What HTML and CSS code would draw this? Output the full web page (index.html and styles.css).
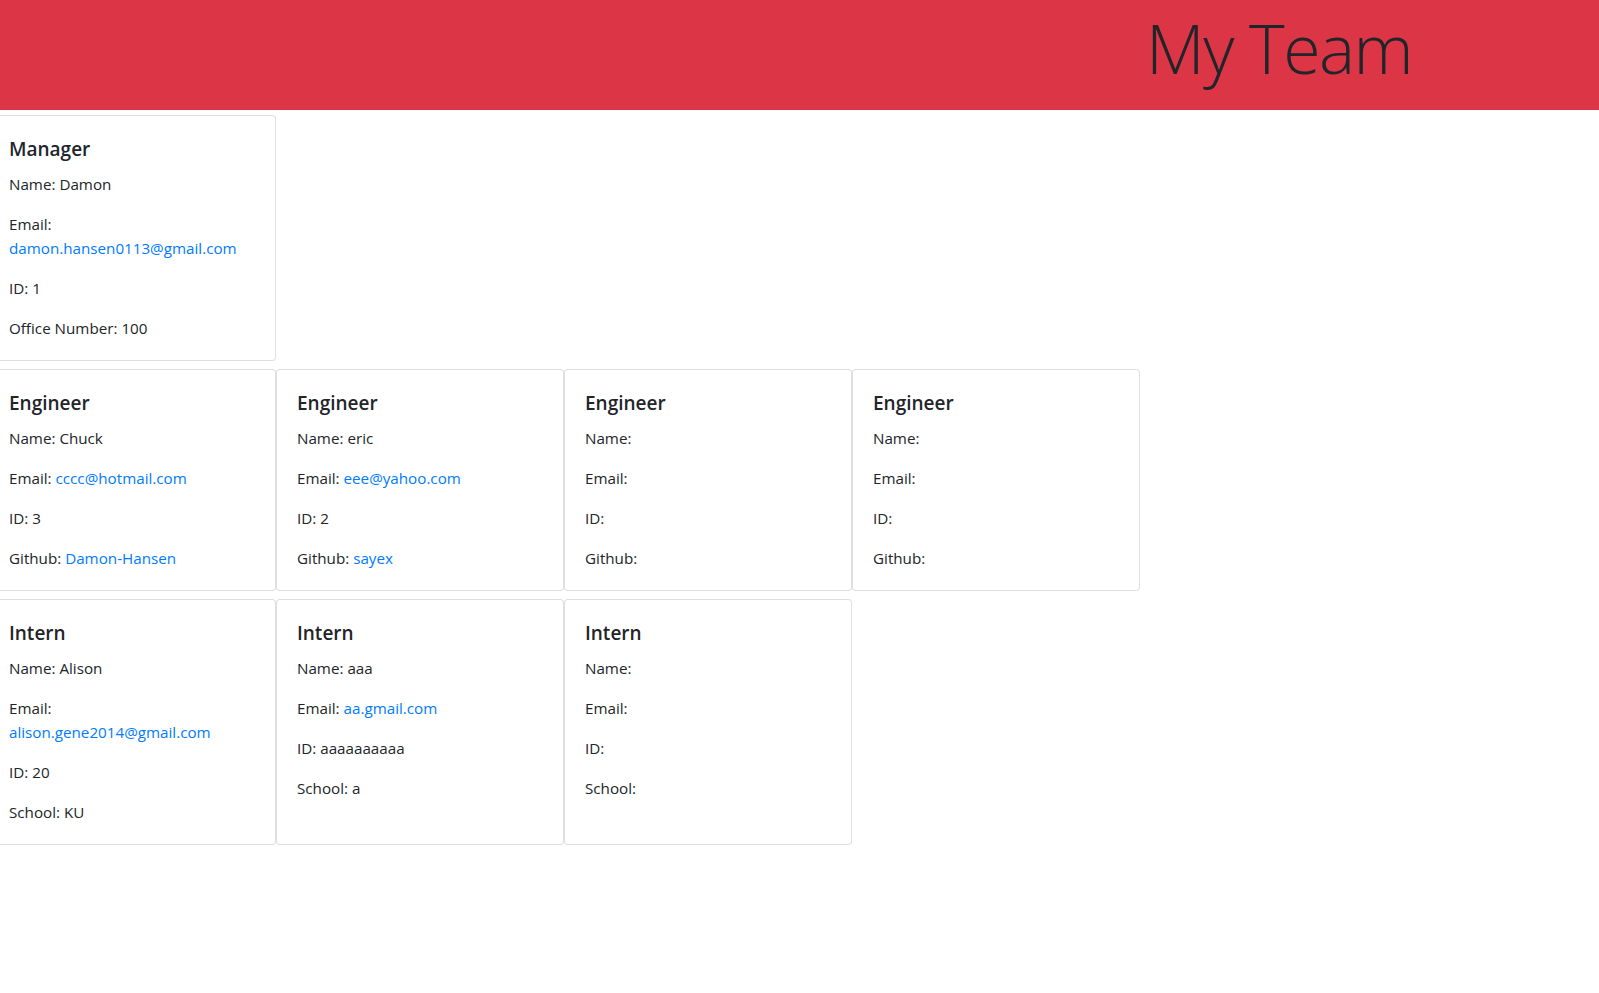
FILE: index.html
```html
<!DOCTYPE html>
<html lang="en">
<head>
<meta charset="utf-8">
<title>My Team</title>
<link rel="stylesheet" href="styles.css">
</head>
<body>
<header class="banner">
  <h1 class="banner-title">My Team</h1>
</header>
<main class="team">
  <div class="team-row">
    <div class="card">
      <h5 class="card-title">Manager</h5>
      <p class="card-text">Name: Damon</p>
      <p class="card-text">Email: <a href="#">damon.hansen0113@gmail.com</a></p>
      <p class="card-text">ID: 1</p>
      <p class="card-text">Office Number: 100</p>
    </div>
  </div>
  <div class="team-row">
    <div class="card">
      <h5 class="card-title">Engineer</h5>
      <p class="card-text">Name: Chuck</p>
      <p class="card-text">Email: <a href="#">cccc@hotmail.com</a></p>
      <p class="card-text">ID: 3</p>
      <p class="card-text">Github: <a href="#">Damon-Hansen</a></p>
    </div>
    <div class="card">
      <h5 class="card-title">Engineer</h5>
      <p class="card-text">Name: eric</p>
      <p class="card-text">Email: <a href="#">eee@yahoo.com</a></p>
      <p class="card-text">ID: 2</p>
      <p class="card-text">Github: <a href="#">sayex</a></p>
    </div>
    <div class="card">
      <h5 class="card-title">Engineer</h5>
      <p class="card-text">Name: </p>
      <p class="card-text">Email: </p>
      <p class="card-text">ID: </p>
      <p class="card-text">Github: </p>
    </div>
    <div class="card">
      <h5 class="card-title">Engineer</h5>
      <p class="card-text">Name: </p>
      <p class="card-text">Email: </p>
      <p class="card-text">ID: </p>
      <p class="card-text">Github: </p>
    </div>
  </div>
  <div class="team-row">
    <div class="card">
      <h5 class="card-title">Intern</h5>
      <p class="card-text">Name: Alison</p>
      <p class="card-text">Email: <a href="#">alison.gene2014@gmail.com</a></p>
      <p class="card-text">ID: 20</p>
      <p class="card-text">School: KU</p>
    </div>
    <div class="card">
      <h5 class="card-title">Intern</h5>
      <p class="card-text">Name: aaa</p>
      <p class="card-text">Email: <a href="#">aa.gmail.com</a></p>
      <p class="card-text">ID: aaaaaaaaaa</p>
      <p class="card-text">School: a</p>
    </div>
    <div class="card">
      <h5 class="card-title">Intern</h5>
      <p class="card-text">Name: </p>
      <p class="card-text">Email: </p>
      <p class="card-text">ID: </p>
      <p class="card-text">School: </p>
    </div>
  </div>
</main>
</body>
</html>
```

FILE: styles.css
```css
html, body {
  margin: 0;
  padding: 0;
  background: #fff;
}
body {
  font-family: "Open Sans", "Noto Sans", "Liberation Sans", sans-serif;
  font-size: 15.2px;
  line-height: 24px;
  color: #212529;
}
.banner {
  background: #dc3545;
  height: 110px;
  box-sizing: border-box;
  padding-left: 1146px;
}
.banner-title {
  margin: 0;
  padding-top: 7px;
  font-family: "Open Sans", "Noto Sans", sans-serif;
  font-size: 68px;
  font-weight: 300;
  letter-spacing: -1.5px;
  line-height: 82px;
  color: #212529;
}
.team {
  margin-left: -12px;
  padding-top: 5px;
}
.team-row {
  display: flex;
  align-items: stretch;
  margin-bottom: 8px;
}
.card {
  width: 288px;
  box-sizing: border-box;
  border: 1px solid rgba(0, 0, 0, 0.125);
  border-radius: 4px;
  padding: 20px;
  background: #fff;
}
.card-title {
  margin: 0 0 10px;
  font-size: 19px;
  font-weight: 600;
  line-height: 26px;
}
.card-text {
  margin: 0 0 16px;
}
.card-text:last-child {
  margin-bottom: 0;
}
.card a {
  color: #007bff;
  text-decoration: none;
}
```
